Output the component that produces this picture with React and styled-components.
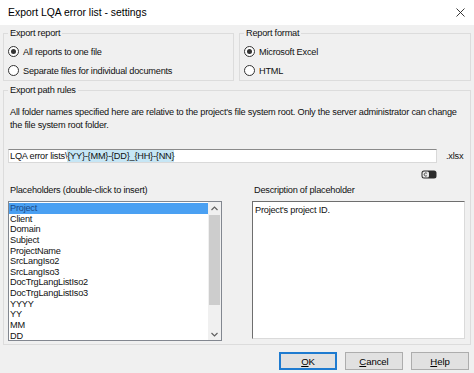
import React from "react";
import styled, { createGlobalStyle } from "styled-components";

const GlobalStyle = createGlobalStyle`
  html, body { margin: 0; padding: 0; background: #f0f0f0; }
  body {
    font-family: "Liberation Sans", Arial, sans-serif;
    font-size: 9.2px;
    letter-spacing: -0.22px;
    color: #111;
  }
  * { box-sizing: border-box; }
`;

const Window = styled.div`
  width: 474px;
  height: 373px;
  display: flex;
  flex-direction: column;
  background: #f0f0f0;
  overflow: hidden;
`;

const TitleBar = styled.div`
  height: 25px;
  flex: none;
  background: #fff;
  display: flex;
  align-items: center;
  justify-content: space-between;
  padding: 0 9px 0 8px;
  font-size: 10.4px;
  letter-spacing: 0;
  color: #000;
`;

const Body = styled.div`
  flex: 1;
  display: flex;
  flex-direction: column;
  padding: 2px 3px 0 3px;
`;

const TopRow = styled.div`
  display: grid;
  grid-template-columns: 231px 1fr;
  gap: 5px;
`;

const Group = styled.fieldset`
  margin: ${(p) => p.$mt || 0}px 0 0 0;
  padding: ${(p) => p.$pt || 0}px 5px 0 4px;
  border: 1px solid #dcdcdc;
  height: ${(p) => p.$h}px;
  min-width: 0;
  display: flex;
  flex-direction: column;
`;

const Legend = styled.legend`
  padding: 0 2px;
  line-height: 12px;
`;

const RadioRow = styled.label`
  display: flex;
  align-items: center;
  height: 20px;
  gap: 4px;
`;

const RadioCircle = styled.span`
  width: 11px;
  height: 11px;
  border-radius: 50%;
  border: 1px solid #333;
  background: #fff;
  display: flex;
  align-items: center;
  justify-content: center;
  flex: none;
  &::after {
    content: "";
    width: 5px;
    height: 5px;
    border-radius: 50%;
    background: ${(p) => (p.$checked ? "#333" : "transparent")};
  }
`;

const Paragraph = styled.p`
  margin: 10px 0 0 2px;
  line-height: 13px;
  white-space: nowrap;
`;

const PathRow = styled.div`
  display: flex;
  align-items: center;
  margin-top: 17px;
  gap: 9px;
`;

const PathInput = styled.div`
  width: 429px;
  height: 14px;
  background: #fff;
  border: 1px solid #d9d9d9;
  border-top-color: #8a8a8a;
  display: flex;
  align-items: center;
  padding-left: 1px;
  line-height: 12px;
  white-space: nowrap;
`;

const Selected = styled.span`
  background: #c6e6f5;
`;

const ToggleRow = styled.div`
  display: flex;
  justify-content: flex-start;
  padding-left: 413px;
  margin-top: 7px;
  height: 9px;
`;

const Columns = styled.div`
  display: grid;
  grid-template-columns: 214px 213px;
  column-gap: 30px;
  margin-top: 5px;
`;

const ColLabel = styled.div`
  line-height: 12px;
  padding-left: 2px;
  margin-bottom: 5px;
`;

const ListBox = styled.div`
  height: 140px;
  background: #fff;
  border: 1px solid #828790;
  display: flex;
  overflow: hidden;
`;

const Items = styled.div`
  flex: 1;
  padding-top: 1px;
  overflow: hidden;
`;

const Item = styled.div`
  height: 10.65px;
  line-height: 10.65px;
  padding-left: 1px;
  white-space: nowrap;
  background: ${(p) => (p.$selected ? "#4aa0f2" : "transparent")};
  color: ${(p) => (p.$selected ? "#1d4a86" : "#111")};
`;

const ScrollBar = styled.div`
  width: 13px;
  flex: none;
  background: #f0f0f0;
  display: flex;
  flex-direction: column;
  align-items: center;
`;

const Arrow = styled.div`
  height: 12px;
  width: 100%;
  display: flex;
  align-items: center;
  justify-content: center;
`;

const Thumb = styled.div`
  width: 11px;
  height: 90px;
  background: #cdcdcd;
  margin-top: 1px;
`;

const Spacer = styled.div`
  flex: 1;
`;

const DescBox = styled.div`
  height: 138px;
  background: #fff;
  border: 1px solid #dadada;
  border-top-color: #6e6e6e;
  border-left-color: #6e6e6e;
  padding: 2px 2px;
  line-height: 12px;
`;

const ButtonRow = styled.div`
  display: flex;
  justify-content: flex-end;
  gap: 8px;
  padding-right: 2px;
  margin-top: 7px;
`;

const Button = styled.button`
  width: 58px;
  height: 18px;
  padding: 0;
  font-family: inherit;
  font-size: 9.6px;
  letter-spacing: -0.1px;
  color: #000;
  background: #e1e1e1;
  border: ${(p) => (p.$default ? "2px solid #1e7bd0" : "1px solid #adadad")};
  display: flex;
  align-items: center;
  justify-content: center;
  u { text-decoration: underline; }
`;

const Chevron = ({ up }) => (
  <svg width="7" height="5" viewBox="0 0 7 5">
    <path
      d={up ? "M0.5 4 L3.5 1 L6.5 4" : "M0.5 1 L3.5 4 L6.5 1"}
      fill="none"
      stroke="#606060"
      strokeWidth="1.2"
    />
  </svg>
);

const items = [
  "Project",
  "Client",
  "Domain",
  "Subject",
  "ProjectName",
  "SrcLangIso2",
  "SrcLangIso3",
  "DocTrgLangListIso2",
  "DocTrgLangListIso3",
  "YYYY",
  "YY",
  "MM",
  "DD",
];

export default function App() {
  return (
    <Window>
      <GlobalStyle />
      <TitleBar>
        <span>Export LQA error list - settings</span>
        <svg width="9" height="9" viewBox="0 0 9 9">
          <path d="M0.5 0.5 L8.5 8.5 M8.5 0.5 L0.5 8.5" stroke="#222" strokeWidth="0.9" />
        </svg>
      </TitleBar>
      <Body>
        <TopRow>
          <Group $h={54} $pt={3}>
            <Legend>Export report</Legend>
            <RadioRow>
              <RadioCircle $checked />
              All reports to one file
            </RadioRow>
            <RadioRow>
              <RadioCircle />
              Separate files for individual documents
            </RadioRow>
          </Group>
          <Group $h={54} $pt={3}>
            <Legend>Report format</Legend>
            <RadioRow>
              <RadioCircle $checked />
              Microsoft Excel
            </RadioRow>
            <RadioRow>
              <RadioCircle />
              HTML
            </RadioRow>
          </Group>
        </TopRow>
        <Group $h={261} $mt={3}>
          <Legend>Export path rules</Legend>
          <Paragraph>
            All folder names specified here are relative to the project's file system root. Only the server administrator can change
            <br />
            the file system root folder.
          </Paragraph>
          <PathRow>
            <PathInput>
              LQA error lists\<Selected>{"{YY}-{MM}-{DD}_{HH}-{NN}"}</Selected>
            </PathInput>
            <span>.xlsx</span>
          </PathRow>
          <ToggleRow>
            <svg width="16" height="9" viewBox="0 0 16 9">
              <rect x="0.5" y="0.5" width="15" height="8" rx="2.5" fill="#2b2b2b" />
              <rect x="1.5" y="1.5" width="6.5" height="6" rx="1.5" fill="#e8e8e8" />
              <path d="M5.8 3.2 A1.6 1.6 0 1 0 5.8 5.8" fill="none" stroke="#333" strokeWidth="0.9" />
            </svg>
          </ToggleRow>
          <Columns>
            <div>
              <ColLabel>Placeholders (double-click to insert)</ColLabel>
              <ListBox>
                <Items>
                  {items.map((it, i) => (
                    <Item key={it} $selected={i === 0}>
                      {it}
                    </Item>
                  ))}
                </Items>
                <ScrollBar>
                  <Arrow>
                    <Chevron up />
                  </Arrow>
                  <Thumb />
                  <Spacer />
                  <Arrow>
                    <Chevron />
                  </Arrow>
                </ScrollBar>
              </ListBox>
            </div>
            <div>
              <ColLabel>Description of placeholder</ColLabel>
              <DescBox>Project's project ID.</DescBox>
            </div>
          </Columns>
        </Group>
        <ButtonRow>
          <Button $default>
            <span><u>O</u>K</span>
          </Button>
          <Button>
            <span><u>C</u>ancel</span>
          </Button>
          <Button>
            <span><u>H</u>elp</span>
          </Button>
        </ButtonRow>
      </Body>
    </Window>
  );
}
